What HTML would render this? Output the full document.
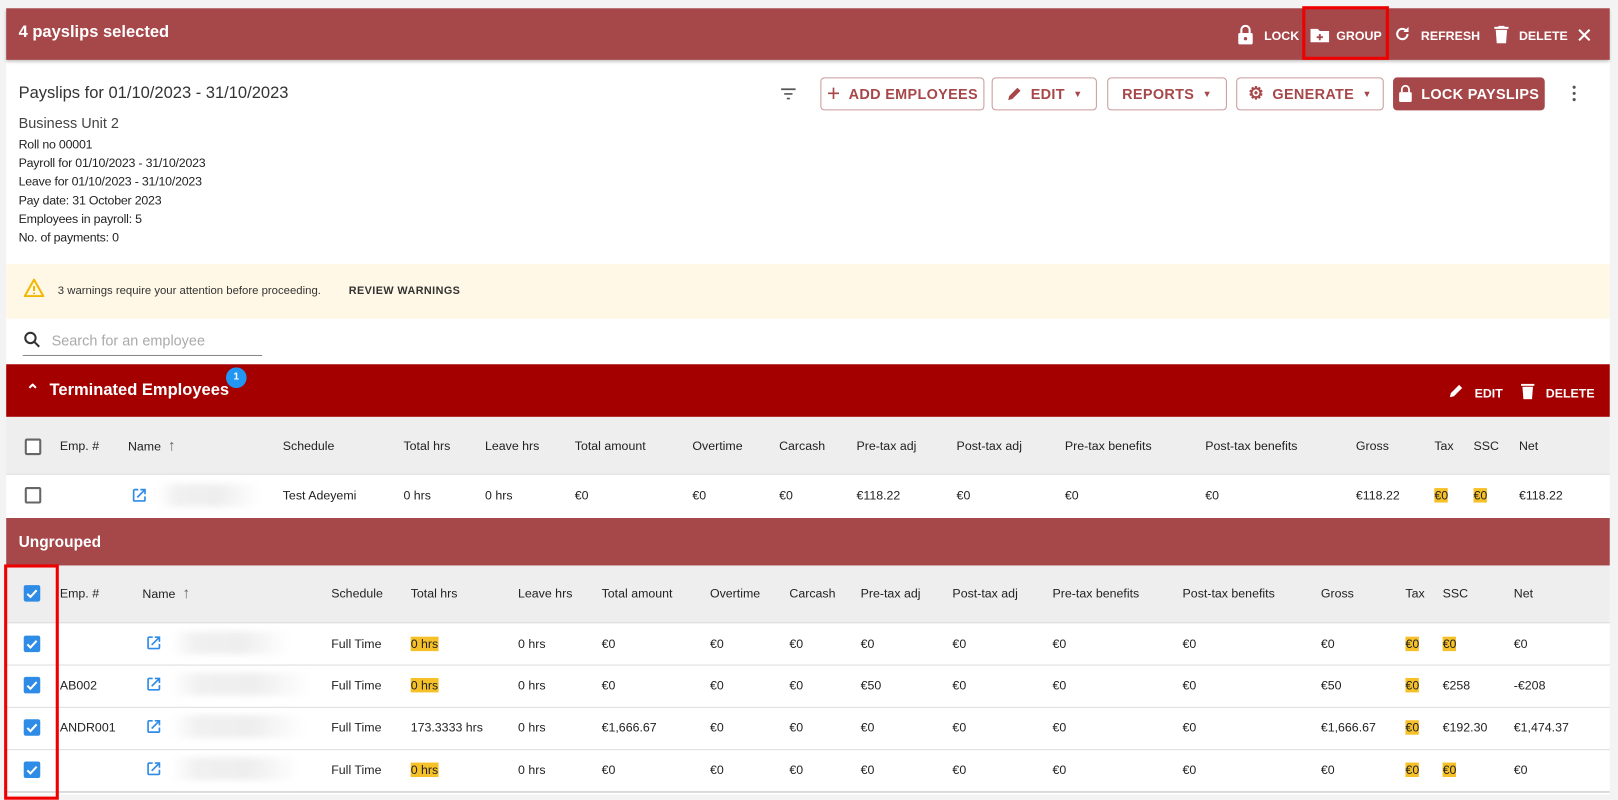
<!DOCTYPE html>
<html><head><meta charset="utf-8"><style>
*{box-sizing:border-box;margin:0;padding:0}
body{width:1618px;height:800px;background:#f3f3f3;font-family:"Liberation Sans",sans-serif;overflow:hidden;color:#222}
#w{position:relative;width:1568px;height:775px;transform:scale(1.03189);transform-origin:0 0}
.a{position:absolute;white-space:nowrap}
.t{font-size:12px;color:#222;transform:translateY(-50%)}
.hl{background:#f5c028}
.btn{position:absolute;top:75px;height:32px;border:1px solid #c99a9b;border-radius:4px;color:#a6474a;font-size:14px;font-weight:bold;display:flex;align-items:center;justify-content:center;gap:8px;letter-spacing:.3px}
.cb{position:absolute;width:16px;height:16px;border:2px solid #666;border-radius:2px;background:#fff}
.cbc{position:absolute;width:16px;height:16px;border-radius:2px;background:#2e8be6}
.blur{position:absolute;height:22px;background:linear-gradient(90deg,#fff,#f0f0f0 20%,#eee 60%,#fff);filter:blur(3px)}
.line{position:absolute;left:6px;width:1554px;height:1px;background:#ddd}
.wt{color:#fff;font-weight:bold;font-size:12px}
</style></head><body><div id="w">
<div class="a" style="left:6px;top:8px;width:1554px;height:762px;background:#fff"></div>
<div class="a" style="left:6px;top:8px;width:1554px;height:50px;background:#a6474a;box-shadow:0 2px 3px rgba(0,0,0,.25)"></div>
<div class="a" style="left:18px;top:23px;color:#fff;font-weight:bold;font-size:16px">4 payslips selected</div>
<svg class="a" style="left:1199px;top:24px" width="16" height="20" viewBox="0 0 16 20"><path d="M4 8V5a4 4 0 0 1 8 0v3" stroke="#fff" stroke-width="2" fill="none"/><rect x="1" y="8" width="14" height="11" rx="1.5" fill="#fff"/><circle cx="8" cy="13.5" r="1.6" fill="#a6474a"/></svg>
<div class="a wt" style="left:1225px;top:28px">LOCK</div>
<div class="a" style="left:1262px;top:6px;width:84px;height:52px;border:3px solid #e00"></div>
<svg class="a" style="left:1269px;top:26px" width="20" height="16" viewBox="0 0 20 16"><path d="M1 2h7l2 2h9v11H1z" fill="#fff"/><path d="M10 7v6M7 10h6" stroke="#a6474a" stroke-width="1.8"/></svg>
<div class="a wt" style="left:1295px;top:28px">GROUP</div>
<svg class="a" style="left:1351px;top:25px" width="16" height="16" viewBox="0 0 16 16"><path d="M13 8a5 5 0 1 1-1.5-3.6" stroke="#fff" stroke-width="2" fill="none"/><path d="M14 1v5h-5z" fill="#fff"/></svg>
<div class="a wt" style="left:1377px;top:28px">REFRESH</div>
<svg class="a" style="left:1448px;top:25px" width="14" height="17" viewBox="0 0 14 17"><rect x="0" y="1" width="14" height="2" fill="#fff"/><rect x="4" y="0" width="6" height="2" fill="#fff"/><path d="M1.5 4h11l-1 13h-9z" fill="#fff"/></svg>
<div class="a wt" style="left:1472px;top:28px">DELETE</div>
<div class="a" style="left:1527px;top:22px;color:#fff;font-size:20px">✕</div>
<div class="a" style="left:18px;top:82px;font-size:16px;color:#333">Payslips for 01/10/2023 - 31/10/2023</div>
<div class="a" style="left:18px;top:111px;font-size:14px;color:#444">Business Unit 2</div>
<div class="a" style="left:18px;top:131px;font-size:12px;line-height:18px;color:#222;letter-spacing:-.2px">Roll no 00001<br>Payroll for 01/10/2023 - 31/10/2023<br>Leave for 01/10/2023 - 31/10/2023<br>Pay date: 31 October 2023<br>Employees in payroll: 5<br>No. of payments: 0</div>
<svg class="a" style="left:756px;top:85px" width="16" height="12" viewBox="0 0 16 12"><path d="M1 1.5h14M4 6h8M6.5 10.5h3" stroke="#555" stroke-width="1.6"/></svg>
<div class="btn" style="left:795px;width:159px"><span style="font-size:22px;font-weight:normal">+</span>ADD EMPLOYEES</div>
<div class="btn" style="left:961px;width:102px"><svg width="16" height="16" viewBox="0 0 16 16"><path d="M2 14l1-4 8-8 3 3-8 8z" fill="#a6474a"/></svg>EDIT <span style="font-size:9px">▼</span></div>
<div class="btn" style="left:1073px;width:116px">REPORTS <span style="font-size:9px">▼</span></div>
<div class="btn" style="left:1198px;width:143px"><span style="font-size:17px">⚙</span>GENERATE <span style="font-size:9px">▼</span></div>
<div class="btn" style="left:1350px;width:147px;background:#a6474a;border-color:#a6474a;color:#fff"><svg width="14" height="18" viewBox="0 0 16 20"><path d="M4 8V5a4 4 0 0 1 8 0v3" stroke="#fff" stroke-width="2" fill="none"/><rect x="1" y="8" width="14" height="11" rx="1.5" fill="#fff"/></svg>LOCK PAYSLIPS</div>
<div class="a" style="left:1524px;top:83px;width:4px;font-size:0"><div style="width:3px;height:3px;background:#555;border-radius:50%;margin-bottom:3px"></div><div style="width:3px;height:3px;background:#555;border-radius:50%;margin-bottom:3px"></div><div style="width:3px;height:3px;background:#555;border-radius:50%"></div></div>
<div class="a" style="left:6px;top:256px;width:1554px;height:53px;background:#fff8e6"></div>
<svg class="a" style="left:23px;top:270px" width="20" height="18" viewBox="0 0 20 18"><path d="M10 1L19 17H1z" fill="none" stroke="#f2b705" stroke-width="2" stroke-linejoin="round"/><path d="M10 7v5" stroke="#f2b705" stroke-width="2"/><circle cx="10" cy="14.3" r="1" fill="#f2b705"/></svg>
<div class="a" style="left:56px;top:276px;font-size:11px;color:#333">3 warnings require your attention before proceeding.</div>
<div class="a" style="left:338px;top:276px;font-size:10.5px;color:#333;font-weight:bold;letter-spacing:.4px">REVIEW WARNINGS</div>
<svg class="a" style="left:23px;top:321px" width="16" height="16" viewBox="0 0 16 16"><circle cx="6.5" cy="6.5" r="5" stroke="#333" stroke-width="2" fill="none"/><path d="M10 10l5 5" stroke="#333" stroke-width="2"/></svg>
<div class="a" style="left:50px;top:322px;font-size:14px;color:#aaa">Search for an employee</div>
<div class="a" style="left:22px;top:344px;width:232px;height:1px;background:#888"></div>
<div class="a" style="left:6px;top:353px;width:1554px;height:51px;background:#a50000"></div>
<div class="a" style="left:25px;top:369px;color:#fff;font-size:16px;font-weight:bold">⌃</div>
<div class="a" style="left:48px;top:370px;color:#fff;font-size:16px;font-weight:bold">Terminated Employees</div>
<div class="a" style="left:219px;top:356px;width:20px;height:20px;border-radius:50%;background:#2196f3;color:#fff;font-size:10px;font-weight:bold;text-align:center;line-height:20px">1</div>
<svg class="a" style="left:1403px;top:371px" width="16" height="16" viewBox="0 0 16 16"><path d="M2 14l1-4 8-8 3 3-8 8z" fill="#fff"/></svg>
<div class="a wt" style="left:1429px;top:374px">EDIT</div>
<svg class="a" style="left:1474px;top:371px" width="13" height="16" viewBox="0 0 14 17"><rect x="0" y="1" width="14" height="2" fill="#fff"/><path d="M1.5 4h11l-1 13h-9z" fill="#fff"/></svg>
<div class="a wt" style="left:1498px;top:374px">DELETE</div>
<div class="a" style="left:6px;top:404px;width:1554px;height:56px;background:#eee"></div>
<div class="line" style="top:459px"></div>
<div class="cb" style="left:24px;top:425px"></div>
<div class="cb" style="left:24px;top:472px"></div>
<div id="t1"></div>
<div class="a" style="left:6px;top:502px;width:1554px;height:46px;background:#a6474a"></div>
<div class="a" style="left:18px;top:517px;color:#fff;font-size:15px;font-weight:bold">Ungrouped</div>
<div class="a" style="left:6px;top:548px;width:1554px;height:56px;background:#eee"></div>
<div class="line" style="top:603px"></div>
<div class="line" style="top:644px"></div>
<div class="line" style="top:685px"></div>
<div class="line" style="top:726px"></div>
<div class="line" style="top:767px;background:#bbb"></div>
<div id="t2"></div>
<div class="a" style="left:4px;top:547px;width:53px;height:228px;border:3px solid #e00"></div>
</div>
<script>
function put(id,xs,rows){let h='';rows.forEach(([y,cells])=>{cells.forEach((c,i)=>{if(c==null||c==='')return;let s=c,cls='';if(typeof c==='object'){s=c.t;cls='hl'}h+=`<div class="a t" style="left:${xs[i]}px;top:${y}px"><span class="${cls}">${s}</span></div>`})});document.getElementById(id).outerHTML=h}
const H=["Emp. #","Name &nbsp;<span style='color:#666;font-size:15px'>↑</span>","Schedule","Total hrs","Leave hrs","Total amount","Overtime","Carcash","Pre-tax adj","Post-tax adj","Pre-tax benefits","Post-tax benefits","Gross","Tax","SSC","Net"];
const x1=[58,124,274,391,470,557,671,755,830,927,1032,1168,1314,1390,1428,1472];
const x2=[58,138,321,398,502,583,688,765,834,923,1020,1146,1280,1362,1398,1467];
const z={t:"€0"},hz={t:"0 hrs"};
put('t1',x1,[[432,H],[480,["","","Test Adeyemi","0 hrs","0 hrs","€0","€0","€0","€118.22","€0","€0","€0","€118.22",z,z,"€118.22"]]]);
put('t2',x2,[[575,H],[624,["","","Full Time",hz,"0 hrs","€0","€0","€0","€0","€0","€0","€0","€0",z,z,"€0"]],
[664,["AB002","","Full Time",hz,"0 hrs","€0","€0","€0","€50","€0","€0","€0","€50",z,"€258","-€208"]],
[705,["ANDR001","","Full Time","173.3333 hrs","0 hrs","€1,666.67","€0","€0","€0","€0","€0","€0","€1,666.67",z,"€192.30","€1,474.37"]],
[746,["","","Full Time",hz,"0 hrs","€0","€0","€0","€0","€0","€0","€0","€0",z,z,"€0"]]]);
let b='';[567,616,656,697,738].forEach(y=>{b+=`<div class="cbc" style="left:23px;top:${y}px"><svg width="16" height="16" viewBox="0 0 16 16"><path d="M3.5 8.5l3 3 6-6.5" stroke="#fff" stroke-width="2" fill="none"/></svg></div>`});
[[128,472,100],[142,615,115],[142,655,135],[142,696,130],[142,737,125]].forEach(([x,y,w],i)=>{b+=`<svg class="a" style="left:${x}px;top:${y+1}px" width="14" height="14" viewBox="0 0 14 14"><path d="M6 1.5H2.5a1 1 0 0 0-1 1v9a1 1 0 0 0 1 1h9a1 1 0 0 0 1-1V8" stroke="#2e8be6" stroke-width="1.6" fill="none"/><path d="M5 9l7-7M8 1.5h4.5V6" stroke="#2e8be6" stroke-width="1.6" fill="none"/></svg><div class="blur" style="left:${x+24}px;top:${y-3}px;width:${w}px"></div>`});
document.getElementById('w').insertAdjacentHTML('beforeend',b);
</script>
</body></html>
